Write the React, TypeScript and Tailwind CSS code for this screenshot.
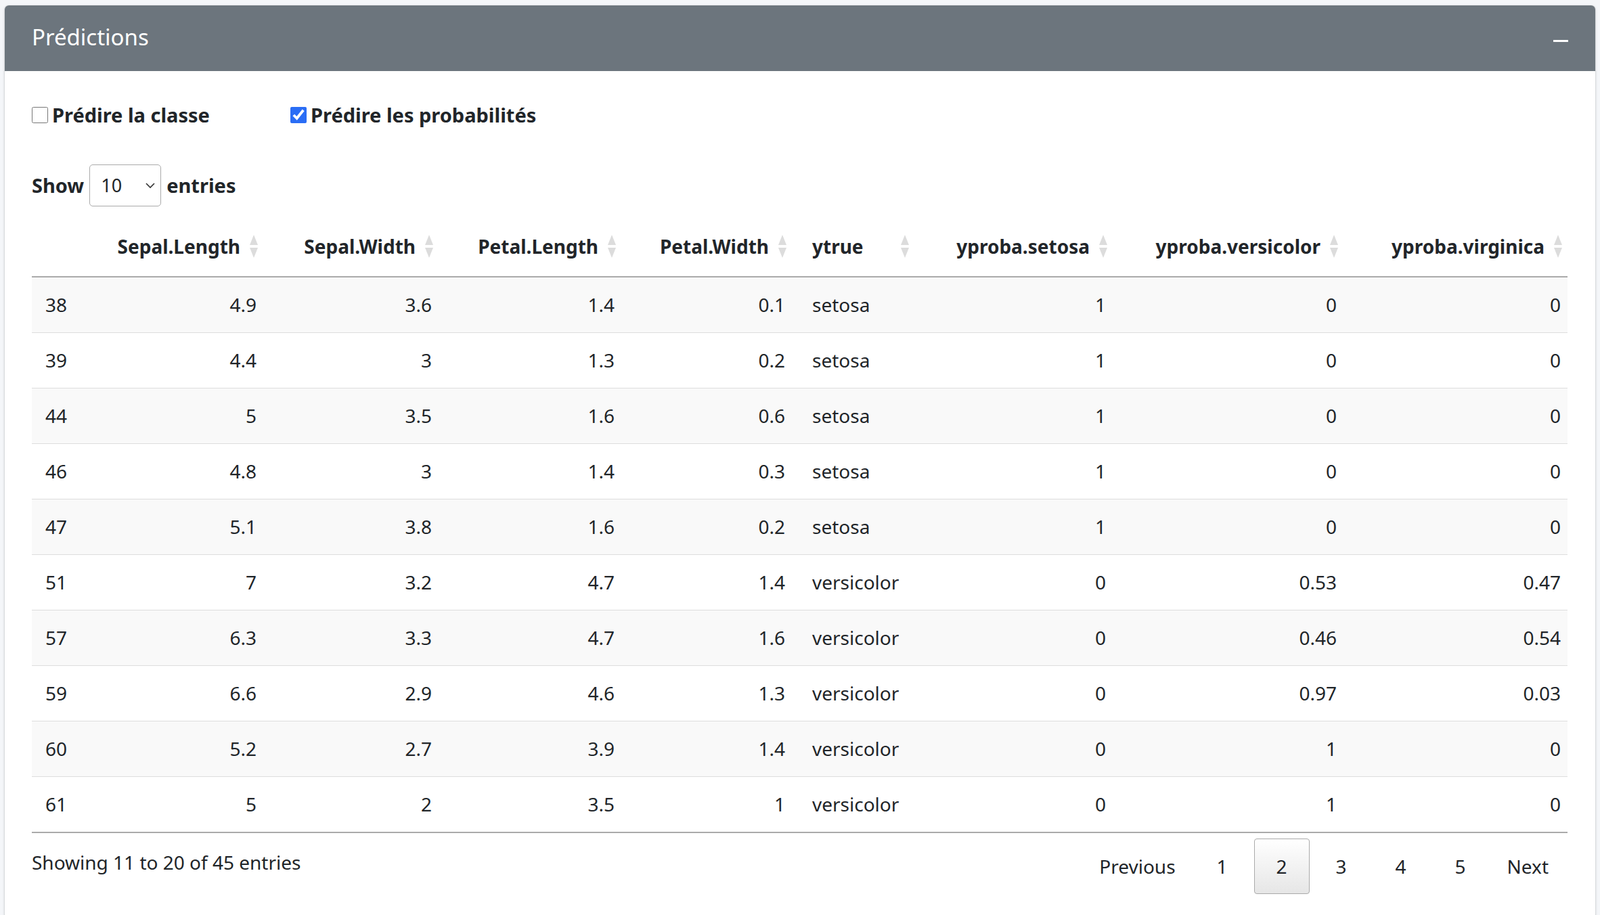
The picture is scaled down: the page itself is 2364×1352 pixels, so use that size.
const cols = [
  { h: "", w: "w-[95px]", left: true },
  { h: "Sepal.Length", w: "w-[247px]" },
  { h: "Sepal.Width", w: "w-[259px]" },
  { h: "Petal.Length", w: "w-[270px]" },
  { h: "Petal.Width", w: "w-[252px]" },
  { h: "ytrue", w: "w-[181px]", left: true },
  { h: "yproba.setosa", w: "w-[293px]" },
  { h: "yproba.versicolor", w: "w-[341px]" },
  { h: "yproba.virginica", w: "w-[331px]" },
];

const rows = [
  ["38", "4.9", "3.6", "1.4", "0.1", "setosa", "1", "0", "0"],
  ["39", "4.4", "3", "1.3", "0.2", "setosa", "1", "0", "0"],
  ["44", "5", "3.5", "1.6", "0.6", "setosa", "1", "0", "0"],
  ["46", "4.8", "3", "1.4", "0.3", "setosa", "1", "0", "0"],
  ["47", "5.1", "3.8", "1.6", "0.2", "setosa", "1", "0", "0"],
  ["51", "7", "3.2", "4.7", "1.4", "versicolor", "0", "0.53", "0.47"],
  ["57", "6.3", "3.3", "4.7", "1.6", "versicolor", "0", "0.46", "0.54"],
  ["59", "6.6", "2.9", "4.6", "1.3", "versicolor", "0", "0.97", "0.03"],
  ["60", "5.2", "2.7", "3.9", "1.4", "versicolor", "0", "1", "0"],
  ["61", "5", "2", "3.5", "1", "versicolor", "0", "1", "0"],
];

function SortIcon() {
  return (
    <svg width="12" height="34" viewBox="0 0 12 34" className="absolute right-[8px] top-1/2 -translate-y-1/2">
      <path d="M6 0 L12 15 L0 15 Z" fill="#dcdcdc" />
      <path d="M6 34 L12 19 L0 19 Z" fill="#dcdcdc" />
    </svg>
  );
}

export default function App() {
  return (
    <div className="min-h-[1352px] bg-[#f4f6f9] pt-[8px] px-[7px] font-['Lato','Noto_Sans',sans-serif] text-[#212529]">
      <div className="bg-white rounded-[6px] shadow-[0_0_2px_rgba(0,0,0,0.2),0_2px_4px_rgba(0,0,0,0.15)] overflow-hidden">
        <div className="h-[97px] bg-[#6c757d] flex items-center justify-between px-[40px] text-white">
          <span className="text-[33px] -mt-[4px]">Prédictions</span>
          <span className="block w-[22px] h-[3px] bg-white mt-[8px]" />
        </div>
        <div className="px-[40px] pb-[36px]">
          <div className="flex items-center h-[130px] text-[29px] font-bold">
            <label className="flex items-center gap-[6px] w-[382px]">
              <input type="checkbox" className="w-[24px] h-[24px]" />
              Prédire la classe
            </label>
            <label className="flex items-center gap-[6px]">
              <input type="checkbox" defaultChecked className="w-[24px] h-[24px] accent-[#2a6df5]" />
              Prédire les probabilités
            </label>
          </div>
          <div className="flex items-center gap-[8px] text-[29px] font-bold mt-[8px]">
            Show
            <div className="relative w-[106px] h-[62px] border border-[#aaa] rounded-[5px] flex items-center pl-[16px] font-normal text-[27px]">
              10
              <svg width="14" height="10" viewBox="0 0 14 10" className="absolute right-[8px]">
                <path d="M1 2 L7 8 L13 2" stroke="#333" strokeWidth="1.6" fill="none" />
              </svg>
            </div>
            entries
          </div>
          <table className="mt-[14px] w-[2269px] table-fixed border-collapse text-[28px]">
            <thead>
              <tr className="h-[90px] border-b-2 border-[#aaa]">
                {cols.map((c, i) => (
                  <th key={i} className={`${c.w} relative font-bold ${c.left ? (i === 5 ? "text-left pl-[30px]" : "text-left pl-[20px]") : "text-right pr-[34px]"}`}>
                    {c.h}
                    {c.h && <SortIcon />}
                  </th>
                ))}
              </tr>
            </thead>
            <tbody>
              {rows.map((r, ri) => (
                <tr key={ri} className={`h-[82px] ${ri < rows.length - 1 ? "border-b border-[#ddd]" : ""} ${ri % 2 === 0 ? "bg-[#f9f9f9]" : "bg-white"}`}>
                  {r.map((v, ci) => (
                    <td key={ci} className={cols[ci].left ? (ci === 5 ? "text-left pl-[30px]" : "text-left pl-[20px]") : "text-right pr-[10px]"}>
                      {v}
                    </td>
                  ))}
                </tr>
              ))}
            </tbody>
          </table>
          <div className="border-t-2 border-[#aaa] w-[2269px] flex items-start justify-between pt-[8px] text-[28px]">
            <span className="mt-[14px]">Showing 11 to 20 of 45 entries</span>
            <div className="flex items-center gap-[6px] mr-[6px]">
              <span className="px-[22px] h-[82px] flex items-center">Previous</span>
              {["1", "2", "3", "4", "5"].map((p) => (
                <span
                  key={p}
                  className={`w-[82px] h-[82px] flex items-center justify-center rounded-[4px] ${p === "2" ? "border border-[#aaa] bg-gradient-to-b from-white to-[#e6e6e6]" : ""}`}
                >
                  {p}
                </span>
              ))}
              <span className="px-[22px] h-[82px] flex items-center">Next</span>
            </div>
          </div>
        </div>
      </div>
    </div>
  );
}
